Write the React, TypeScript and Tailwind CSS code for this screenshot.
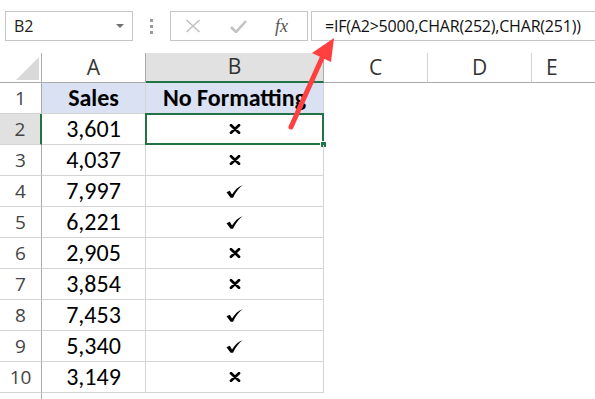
import React from "react";

const rows: { sales: string; ok: boolean }[] = [
  { sales: "3,601", ok: false },
  { sales: "4,037", ok: false },
  { sales: "7,997", ok: true },
  { sales: "6,221", ok: true },
  { sales: "2,905", ok: false },
  { sales: "3,854", ok: false },
  { sales: "7,453", ok: true },
  { sales: "5,340", ok: true },
  { sales: "3,149", ok: false },
];

const cellFont = { fontFamily: "Carlito, Lato, 'Open Sans', sans-serif" };
const uiFont = { fontFamily: "'Open Sans', 'Noto Sans', sans-serif" };

function Tick() {
  return (
    <svg width="17" height="13" viewBox="0 0 17 13">
      <path d="M0.5 7.2 L3.8 5.8 L6 9.6 C8.8 5 12 2 16.5 0.3 C12.5 3.6 9.5 7.5 7 12.8 L4.6 12.8 Z" fill="#000" />
    </svg>
  );
}

function Cross() {
  return (
    <svg width="12" height="10" viewBox="0 0 12 10">
      <path d="M2 1.2 L10 8.8 M10 1.2 L2 8.8" stroke="#000" strokeWidth="2.7" strokeLinecap="round" />
    </svg>
  );
}

function FormulaBar() {
  return (
    <div className="flex items-center h-[53px] pt-[11px] pb-[12px] bg-white">
      <div className="ml-[5px] w-[128px] h-[30px] border border-[#c6c6c6] flex items-center justify-between pl-[8px] pr-[8px]">
        <span className="text-[16px] text-[#222]" style={uiFont}>B2</span>
        <span className="w-0 h-0 border-l-[4px] border-r-[4px] border-t-[4px] border-l-transparent border-r-transparent border-t-[#6e6e6e]" />
      </div>
      <div className="w-[37px] flex flex-col items-center gap-[3px]">
        <span className="w-[3px] h-[3px] bg-[#9a9a9a]" />
        <span className="w-[3px] h-[3px] bg-[#9a9a9a]" />
        <span className="w-[3px] h-[3px] bg-[#9a9a9a]" />
      </div>
      <div className="w-[138px] h-[30px] border border-[#c6c6c6] flex items-center pl-[14px] gap-[29px]">
        <svg width="16" height="14" viewBox="0 0 16 14">
          <path d="M1.5 1 L14.5 13 M14.5 1 L1.5 13" stroke="#c2c2c2" strokeWidth="1.6" />
        </svg>
        <svg width="17" height="13" viewBox="0 0 17 13">
          <path d="M1 7 L6 12 L16 1" stroke="#c2c2c2" strokeWidth="2.6" fill="none" />
        </svg>
        <span className="text-[18px] italic text-[#555] -ml-[1px]" style={{ fontFamily: "'Liberation Serif', serif" }}>
          fx
        </span>
      </div>
      <div className="ml-[3px] flex-1 h-[30px] border border-r-0 border-[#c6c6c6] flex items-center pl-[13px]">
        <span className="text-[16px] tracking-[-0.2px] text-[#111]" style={uiFont}>
          =IF(A2&gt;5000,CHAR(252),CHAR(251))
        </span>
      </div>
    </div>
  );
}

function Arrow() {
  return (
    <svg className="absolute left-0 top-0 pointer-events-none" width="595" height="399">
      <line x1="291" y1="127" x2="322" y2="58" stroke="#ff4040" strokeWidth="5" strokeLinecap="round" />
      <polygon points="334,38 312,53 331,62" fill="#ff4040" />
    </svg>
  );
}

export default function App() {
  const colHead = "h-[30px] flex items-center justify-center text-[21px] text-[#333] border-r border-b border-[#ababab]";
  const rowHead = "flex items-center justify-center text-[19px] text-[#444] border-r border-b border-[#d4d4d4]";
  const cell = "flex items-center justify-center border-r border-b border-[#d4d4d4] text-[24px] text-black";

  return (
    <div className="relative w-[595px] h-[399px] overflow-hidden bg-white">
      <FormulaBar />

      {/* column headers */}
      <div className="flex" style={uiFont}>
        <div className="w-[42px] h-[30px] shrink-0 flex items-end justify-end pr-[2px] pb-[2px] border-r border-b border-[#ababab]">
          <div className="w-0 h-0 border-l-[23px] border-b-[23px] border-l-transparent border-b-[#d9d9d9]" />
        </div>
        <div className={`${colHead} w-[104px] shrink-0`}>A</div>
        <div className={`${colHead} w-[178px] shrink-0 bg-[#e1e1e1] border-b-2 border-b-[#217346]`}>B</div>
        <div className={`${colHead} w-[104px] shrink-0 border-r-[#d4d4d4]`}>C</div>
        <div className={`${colHead} w-[104px] shrink-0 border-r-[#d4d4d4]`}>D</div>
        <div className={`${colHead} flex-1 border-r-0 justify-start pl-[14px]`}>E</div>
      </div>

      <div
        className="grid grid-cols-[42px_104px_178px_1fr] grid-rows-[repeat(10,31px)_1fr]"
        style={cellFont}
      >
        {/* row 1 */}
        <div className={`${rowHead} border-r-[#ababab]`} style={uiFont}>1</div>
        <div className={`${cell} bg-[#d9e1f2] font-bold`}>Sales</div>
        <div className={`${cell} bg-[#d9e1f2] font-bold`}>No Formatting</div>
        <div />

        {rows.map((r, i) => {
          const n = i + 2;
          const sel = n === 2;
          return (
            <React.Fragment key={n}>
              <div
                className={`${rowHead} ${sel ? "bg-[#e1e1e1] border-r-2 border-r-[#217346] text-[#2f5e45]" : "border-r-[#ababab]"}`}
                style={uiFont}
              >
                {n}
              </div>
              <div className={cell}>{r.sales}</div>
              <div className={`${cell} relative`}>
                {sel && (
                  <>
                    <div className="absolute -left-[1px] -top-[1px] -right-[1px] -bottom-[1px] border-2 border-[#217346]" />
                    <div className="absolute -right-[4px] -bottom-[4px] w-[7px] h-[7px] bg-[#217346] border border-white" />
                  </>
                )}
                {r.ok ? <Tick /> : <Cross />}
              </div>
              <div />
            </React.Fragment>
          );
        })}

        <div className="h-[10px] border-r border-[#ababab]" />
        <div />
        <div />
        <div />
      </div>
      <Arrow />
    </div>
  );
}
